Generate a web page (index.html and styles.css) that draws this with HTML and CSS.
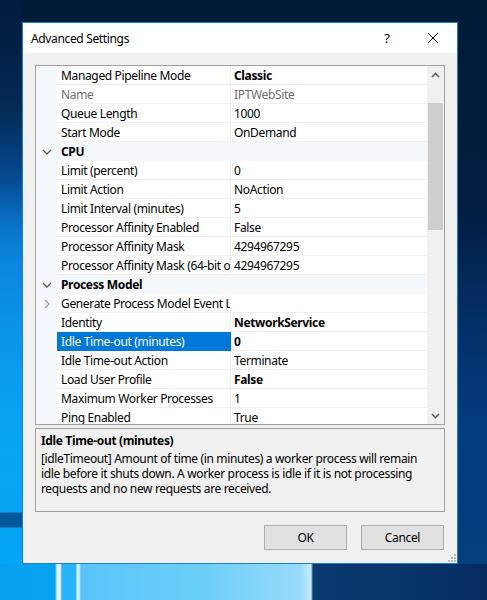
FILE: index.html
```html
<!DOCTYPE html>
<html>
<head>
<meta charset="utf-8">
<link rel="stylesheet" href="styles.css">
</head>
<body>
<div class="desktop">
  <div class="window">
    <div class="titlebar">
      <span class="title">Advanced Settings</span>
      <span class="help">?</span>
      <span class="close"><svg width="12" height="12" viewBox="0 0 12 12"><path d="M1 1L11 11M11 1L1 11" stroke="#000" stroke-width="1" fill="none"/></svg></span>
    </div>
    <div class="client">
      <div class="grid">
        <div class="rows">
          <div class="row"><span class="gut"></span><span class="name">Managed Pipeline Mode</span><span class="val bold">Classic</span></div>
          <div class="row"><span class="gut"></span><span class="name dim">Name</span><span class="val dim">IPTWebSite</span></div>
          <div class="row"><span class="gut"></span><span class="name">Queue Length</span><span class="val">1000</span></div>
          <div class="row"><span class="gut"></span><span class="name">Start Mode</span><span class="val">OnDemand</span></div>
          <div class="row cat"><span class="gut"><svg width="10" height="6" viewBox="0 0 10 6"><path d="M1 1L5 5L9 1" stroke="#5a5a5a" stroke-width="1.3" fill="none"/></svg></span><span class="catname">CPU</span></div>
          <div class="row"><span class="gut"></span><span class="name">Limit (percent)</span><span class="val">0</span></div>
          <div class="row"><span class="gut"></span><span class="name">Limit Action</span><span class="val">NoAction</span></div>
          <div class="row"><span class="gut"></span><span class="name">Limit Interval (minutes)</span><span class="val">5</span></div>
          <div class="row"><span class="gut"></span><span class="name">Processor Affinity Enabled</span><span class="val">False</span></div>
          <div class="row"><span class="gut"></span><span class="name">Processor Affinity Mask</span><span class="val">4294967295</span></div>
          <div class="row"><span class="gut"></span><span class="name">Processor Affinity Mask (64-bit option)</span><span class="val">4294967295</span></div>
          <div class="row cat"><span class="gut"><svg width="10" height="6" viewBox="0 0 10 6"><path d="M1 1L5 5L9 1" stroke="#5a5a5a" stroke-width="1.3" fill="none"/></svg></span><span class="catname">Process Model</span></div>
          <div class="row"><span class="gut"><svg width="6" height="10" viewBox="0 0 6 10"><path d="M1 1L5 5L1 9" stroke="#a0a0a0" stroke-width="1.3" fill="none"/></svg></span><span class="name">Generate Process Model Event Log Entry</span><span class="val"></span></div>
          <div class="row"><span class="gut"></span><span class="name">Identity</span><span class="val bold">NetworkService</span></div>
          <div class="row"><span class="gut"></span><span class="name sel">Idle Time-out (minutes)</span><span class="val bold">0</span></div>
          <div class="row"><span class="gut"></span><span class="name">Idle Time-out Action</span><span class="val">Terminate</span></div>
          <div class="row"><span class="gut"></span><span class="name">Load User Profile</span><span class="val bold">False</span></div>
          <div class="row"><span class="gut"></span><span class="name">Maximum Worker Processes</span><span class="val">1</span></div>
          <div class="row"><span class="gut"></span><span class="name">Ping Enabled</span><span class="val">True</span></div>
        </div>
        <div class="scrollbar">
          <div class="arrow"><svg width="9" height="6" viewBox="0 0 9 6"><path d="M1 5L4.5 1.5L8 5" stroke="#606060" stroke-width="1.6" fill="none"/></svg></div>
          <div class="track"><div class="thumb"></div></div>
          <div class="arrow"><svg width="9" height="6" viewBox="0 0 9 6"><path d="M1 1L4.5 4.5L8 1" stroke="#606060" stroke-width="1.6" fill="none"/></svg></div>
        </div>
      </div>
      <div class="desc">
        <div class="desc-title">Idle Time-out (minutes)</div>
        <div class="desc-text">[idleTimeout] Amount of time (in minutes) a worker process will remain<br>idle before it shuts down. A worker process is idle if it is not processing<br>requests and no new requests are received.</div>
      </div>
      <div class="buttons">
        <button class="btn">OK</button>
        <button class="btn">Cancel</button>
      </div>
      <div class="grip"><svg width="8" height="8" viewBox="0 0 8 8" fill="#b8b8b8"><rect x="6" y="0" width="2" height="2"/><rect x="3" y="3" width="2" height="2"/><rect x="6" y="3" width="2" height="2"/><rect x="0" y="6" width="2" height="2"/><rect x="3" y="6" width="2" height="2"/><rect x="6" y="6" width="2" height="2"/></svg></div>
    </div>
  </div>
</div>
</body>
</html>
```

FILE: styles.css
```css
html, body {
  margin: 0;
  padding: 0;
}
body {
  width: 487px;
  height: 600px;
  overflow: hidden;
  font-family: "Noto Sans", "Open Sans", sans-serif;
  font-size: 12px;
  letter-spacing: -0.35px;
  color: #000;
}
.desktop {
  width: 487px;
  height: 600px;
  box-sizing: border-box;
  padding: 22px 0 0 22px;
  background:
    linear-gradient(to right, #08a0ee 0, #08a2f0 55px, #d8f2ff 57px, #e8f8ff 60px, #2ab2f8 62px, #2ab4f8 76px, #e8f8ff 77px, #d0f0ff 79px, #58c4fa 81px, #6ccefa 200px, #98dafa 300px, #c4ecfc 311px, #0a3a72 313px, #08356c 400px, #062c60 100%) 0 564px / 100% 36px no-repeat,
    linear-gradient(to bottom, #021a3c 0, #032a56 110px, #054c94 180px, #0a72c8 225px, #0a86dc 260px, #0c92e6 320px, #0a9cee 380px, #06a6f4 450px, #08a4f2 512px, #05589e 513px, #05589e 527px, #04a2f2 528px, #04a6f6 564px) 0 0 / 22px 564px no-repeat,
    linear-gradient(to bottom, #011a38 0, #021d40 200px, #03306a 330px, #043d80 430px, #043b7c 500px, #04407e 564px) 0 0 / 100% 564px no-repeat;
}
.window {
  width: 436px;
  height: 542px;
  box-sizing: border-box;
  border: 1px solid #1c7fd0;
  background: #f0f0f0;
  display: flex;
  flex-direction: column;
}
.titlebar {
  height: 30px;
  background: #fff;
  display: flex;
  align-items: center;
  padding-left: 8px;
  flex: none;
}
.title {
  flex: 1;
  font-size: 12px;
}
.help {
  width: 14px;
  text-align: center;
  font-size: 13px;
  margin-right: 33px;
}
.close {
  width: 12px;
  height: 12px;
  margin-right: 18px;
  display: flex;
}
.client {
  flex: 1;
  padding: 12px 12px 0 12px;
  display: flex;
  flex-direction: column;
  position: relative;
}
.grid {
  height: 360px;
  box-sizing: border-box;
  border: 1px solid #a0a0a0;
  background: #fff;
  display: flex;
}
.rows {
  width: 391px;
  height: 358px;
  overflow: hidden;
}
.row {
  display: grid;
  grid-template-columns: 21px 174px 196px;
  height: 19px;
  line-height: 18px;
}
.gut {
  background: #f4f7fc;
  display: flex;
  align-items: center;
  justify-content: center;
  height: 19px;
}
.name, .val {
  white-space: nowrap;
  overflow: hidden;
  border-bottom: 1px solid #f0f0f0;
  height: 17px;
  padding-top: 1px;
}
.name {
  padding-left: 4px;
  border-right: 1px solid #f0f0f0;
}
.val {
  padding-left: 3px;
}
.dim {
  color: #6d6d6d;
}
.bold {
  font-weight: bold;
}
.sel {
  background: #0078d7;
  color: #fff;
  border-bottom-color: #0078d7;
  border-right-color: #0078d7;
}
.row.cat {
  background: #f4f7fc;
}
.catname {
  grid-column: 2 / 4;
  padding-left: 4px;
  padding-top: 1px;
  font-weight: bold;
}
.scrollbar {
  width: 17px;
  background: #f0f0f0;
  display: flex;
  flex-direction: column;
}
.arrow {
  height: 17px;
  display: flex;
  align-items: center;
  justify-content: center;
  flex: none;
}
.track {
  flex: 1;
  padding: 20px 1px 0 1px;
}
.thumb {
  height: 127px;
  background: #cdcdcd;
}
.desc {
  margin-top: 3px;
  height: 84px;
  box-sizing: border-box;
  border: 1px solid #a0a0a0;
  padding: 4px 4px 0 5px;
  line-height: 15px;
  white-space: nowrap;
  overflow: hidden;
}
.desc-title {
  font-weight: bold;
  margin-bottom: 3px;
}
.buttons {
  margin-top: 13px;
  display: flex;
  justify-content: flex-end;
  gap: 14px;
  padding-right: 1px;
}
.btn {
  width: 83px;
  height: 25px;
  background: #e1e1e1;
  border: 1px solid #adadad;
  font-family: "Noto Sans", "Open Sans", sans-serif;
  font-size: 12px;
  letter-spacing: -0.35px;
  color: #000;
  padding: 0;
}
.grip {
  position: absolute;
  right: 1px;
  bottom: 1px;
  width: 8px;
  height: 8px;
  display: flex;
}
```
